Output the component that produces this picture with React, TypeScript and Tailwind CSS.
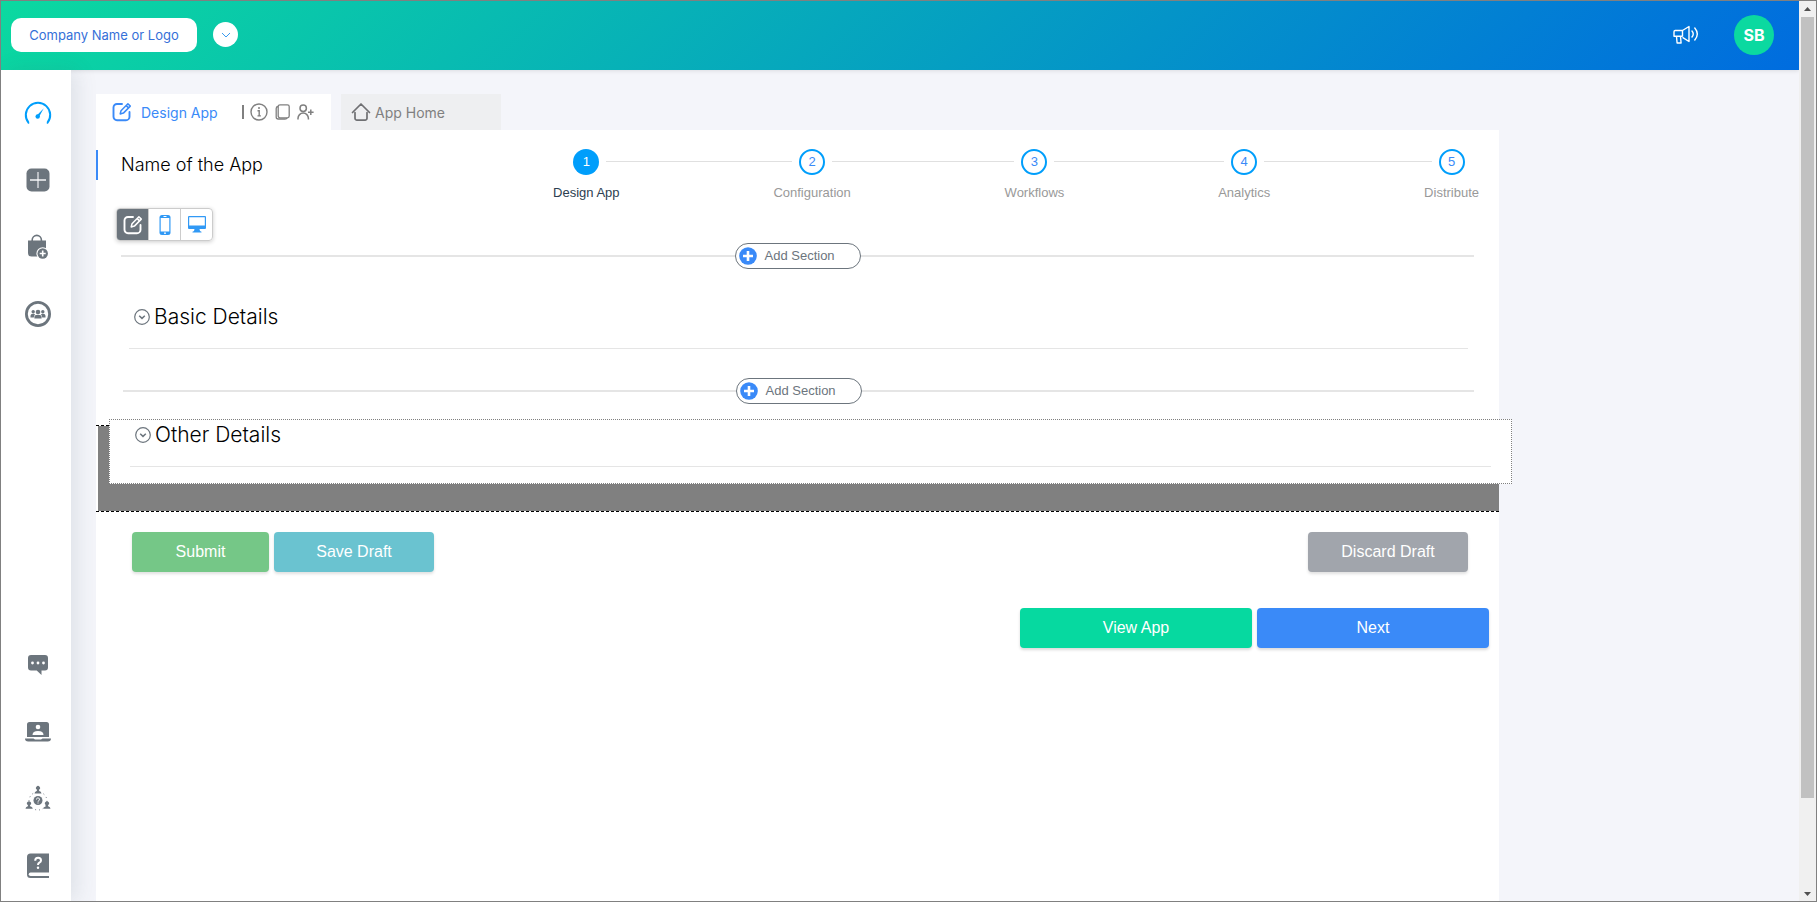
import type { ReactNode } from "react";

const steps = ["Design App", "Configuration", "Workflows", "Analytics", "Distribute"];

function EditIcon() {
  return (
    <svg className="size-[20px]" viewBox="0 0 20 20" fill="none" stroke="currentColor" strokeWidth="1.9" strokeLinecap="round" strokeLinejoin="round">
      <path d="M10 2H5a3.500 3.500 0 0 0-3.500 3.500v9A3.500 3.500 0 0 0 5 18.200h9a3.500 3.500 0 0 0 3.500-3.500V10" />
      <path strokeWidth="1.5" d="m8.200 11.900.8-3.200 6.900-6.900 2.400 2.300-6.900 7zM14.200 3.600l2.300 2.300" />
    </svg>
  );
}

function GaugeIcon() {
  return (
    <svg className="size-[28px] text-[#009efb]" viewBox="0 0 28 28" fill="none" stroke="currentColor">
      <path strokeWidth="2" d="M5.200 23.800h-.6a12.200 12.200 0 1 1 18.800 0h-.6" />
      <circle cx="13.700" cy="17.500" r="2.200" fill="currentColor" stroke="none" />
      <path d="m12.800 16.500 7-7.300-5 9z" fill="currentColor" stroke="none" />
    </svg>
  );
}

function PlusSquareIcon() {
  return (
    <svg className="size-[28px]" viewBox="0 0 28 28">
      <rect x="2.500" y="2.500" width="23" height="23" rx="5" fill="currentColor" />
      <path d="M14 6v16" stroke="#b9bdc2" strokeWidth="2" />
      <path d="M6 14h16" stroke="#fff" strokeWidth="1.400" />
    </svg>
  );
}

function BagIcon() {
  return (
    <svg className="size-[28px]" viewBox="0 0 28 28">
      <path d="M4 7.500h18v16H7.500A3.500 3.500 0 0 1 4 20z" fill="currentColor" />
      <path d="M8.200 9V7a4.600 4.600 0 0 1 9.200 0V9" fill="none" stroke="currentColor" strokeWidth="1.600" />
      <circle cx="18.700" cy="20.500" r="6.300" fill="#fff" />
      <circle cx="18.700" cy="20.500" r="5.200" fill="currentColor" />
      <path d="M18.700 17.500v6M15.700 20.500h6" stroke="#fff" strokeWidth="1.600" />
    </svg>
  );
}

function GroupIcon() {
  return (
    <svg className="size-[28px]" viewBox="0 0 28 28" fill="currentColor">
      <circle cx="14" cy="14" r="11.600" fill="none" stroke="currentColor" strokeWidth="2.800" />
      <circle cx="9.200" cy="11.700" r="1.700" />
      <circle cx="18.800" cy="11.700" r="1.700" />
      <circle cx="14" cy="12" r="2.300" />
      <path d="M6.500 17.600v-1.800q0-2 2.600-2 1.400 0 2 .6-1.300 1-1.300 3.200zM21.500 17.600v-1.800q0-2-2.600-2-1.400 0-2 .6 1.300 1 1.300 3.200zM10.400 18.600v-1.900q0-2 3.600-2t3.600 2v1.900z" />
    </svg>
  );
}

function ChatIcon() {
  return (
    <svg className="size-[28px]" viewBox="0 0 28 28">
      <path d="M7 4h14a3 3 0 0 1 3 3v9.500a3 3 0 0 1-3 3h-3.500V24l-4.800-4.500H7a3 3 0 0 1-3-3V7a3 3 0 0 1 3-3z" fill="currentColor" />
      <circle cx="8.500" cy="12" r="1.400" fill="#fff" />
      <circle cx="14" cy="12" r="1.400" fill="#fff" />
      <circle cx="19.500" cy="12" r="1.400" fill="#fff" />
    </svg>
  );
}

function LaptopUserIcon() {
  return (
    <svg className="size-[28px]" viewBox="0 0 28 28">
      <path d="M5.500 4h17A2.500 2.500 0 0 1 25 6.500V19H3V6.500A2.500 2.500 0 0 1 5.500 4zM1 20.500h8.500l1.500 1h6l1.500-1H27q0 3-3.200 3H4.200q-3.200 0-3.200-3z" fill="currentColor" />
      <circle cx="14" cy="9" r="2.300" fill="#fff" />
      <path d="M8.500 17q0-4 5.500-4t5.500 4z" fill="#fff" />
    </svg>
  );
}

function NetworkIcon() {
  return (
    <svg className="size-[28px]" viewBox="0 0 28 28" fill="currentColor">
      <circle cx="14" cy="16" r="9" fill="none" stroke="currentColor" strokeWidth="1" strokeDasharray="1 3" />
      <path d="M10.500 8.500q0-2 2.300-2.500l.2-1.200a2 2 0 1 1 2 0l.2 1.200q2.300.5 2.300 2.500z" />
      <path d="M1.500 23.800q0-2 2.300-2.500l.2-1.200a2 2 0 1 1 2 0l.2 1.200q2.300.5 2.300 2.500z" />
      <path d="M19.500 23.800q0-2 2.300-2.500l.2-1.200a2 2 0 1 1 2 0l.2 1.200q2.300.5 2.300 2.500z" />
      <circle cx="14" cy="15.500" r="4.500" />
      <path d="M12.500 14.500a1.500 1.500 0 1 1 2.300 1.200q-.8.400-.8 1M14 17.500v1" fill="none" stroke="#fff" strokeWidth="1" />
    </svg>
  );
}

function HelpBookIcon() {
  return (
    <svg className="size-[28px]" viewBox="0 0 28 28">
      <path d="M6.500 1.500H25v24.500H6.500A3.500 3.500 0 0 1 3 22.500V5a3.500 3.500 0 0 1 3.500-3.500z" fill="currentColor" />
      <path d="M6.500 20.500H25V24H6.500a1.700 1.700 0 0 1 0-3.500z" fill="#fff" />
      <path d="M11.200 8.700q0-2.900 2.900-2.900t2.900 2.600q0 1.500-1.600 2.300-1.400.8-1.400 2.300" fill="none" stroke="#fff" strokeWidth="2" />
      <circle cx="14" cy="15.800" r="1.200" fill="#fff" />
    </svg>
  );
}

function InfoIcon() {
  return (
    <svg className="size-[18px]" viewBox="0 0 18 18" fill="none" stroke="currentColor" strokeWidth="1.400">
      <circle cx="9" cy="9" r="8" />
      <path d="M7.500 7.700h1.700v5M7.500 12.900h3.400" />
      <circle cx="9" cy="5" r="1" fill="currentColor" stroke="none" />
    </svg>
  );
}

function CopyIcon() {
  return (
    <svg className="h-[16px] w-[15px]" viewBox="0 0 15 16" fill="none" stroke="currentColor" strokeWidth="1.300">
      <rect x="3.200" y=".8" width="11" height="13" rx="1.800" />
      <path d="M3 2.500q-1.800.3-1.800 2V13a2 2 0 0 0 2 2H10q1.800 0 2-1.200" />
    </svg>
  );
}

function AddUserIcon() {
  return (
    <svg className="h-[16px] w-[17px]" viewBox="0 0 17 16" fill="none" stroke="currentColor" strokeWidth="1.500">
      <circle cx="6.200" cy="4.300" r="3.200" />
      <path d="M1 15.500v-1.200a5.200 5.200 0 0 1 10.400 0v1.200M13.800 5.500v5.600M11 8.300h5.600" />
    </svg>
  );
}

function HomeIcon() {
  return (
    <svg className="size-[20px] text-[#6f7073]" viewBox="0 0 20 20" fill="none" stroke="currentColor" strokeWidth="1.700" strokeLinecap="round" strokeLinejoin="round">
      <path d="M1.500 10.500 10 2l8.500 8.500M4 10.500V16a2 2 0 0 0 2 2.200h8a2 2 0 0 0 2-2.200v-5.500" />
    </svg>
  );
}

function PhoneIcon() {
  return (
    <svg className="h-[20px] w-[12px]" viewBox="0 0 12 20">
      <rect x=".5" y="0" width="11" height="20" rx="2.500" fill="#3199f5" />
      <rect x="1.700" y="3" width="8.600" height="13.500" fill="#fff" />
      <path d="M4.500 1.500h3" stroke="#fff" />
      <circle cx="6" cy="18.200" r=".9" fill="#fff" />
    </svg>
  );
}

function MonitorIcon() {
  return (
    <svg className="h-[17px] w-[18px]" viewBox="0 0 18 17" fill="#3199f5">
      <path d="M1 0h16a1 1 0 0 1 1 1v11a1 1 0 0 1-1 1h-5.500l.5 2 1.500.8v.7h-9v-.7l1.500-.8.5-2H1a1 1 0 0 1-1-1V1a1 1 0 0 1 1-1z" />
      <path d="M1.200 1.200h15.600v8.300H1.200z" fill="#fff" />
    </svg>
  );
}

function MegaphoneIcon() {
  return (
    <svg className="h-[20px] w-[26px]" viewBox="0 0 26 20" fill="none" stroke="#fff" strokeWidth="1.400" strokeLinejoin="round">
      <path d="M9.500 5.500H2.200a1.200 1.200 0 0 0-1.200 1.200v4.600h8.500M9.500 5.500v6M9.500 5.500l6.500-4v15l-6.500-4.200M3.500 11.500l.6 6.500h4l-.6-6.500" />
      <path d="M19 6q2.500 3 0 6M21.800 3q5 6 0 12" strokeLinecap="round" />
    </svg>
  );
}

function ChevronCircle() {
  return (
    <svg className="size-[16px] text-[#6c757d]" viewBox="0 0 16 16" fill="none" stroke="currentColor">
      <circle cx="8" cy="8" r="7.300" strokeWidth="1.200" />
      <path d="m5.200 6.800 2.800 2.600 2.800-2.600" strokeWidth="1.500" />
    </svg>
  );
}

function NavLink({ label, children }: { label: string; children: ReactNode }) {
  return (
    <a href="#" aria-label={label} className="flex h-[67px] items-center justify-center pl-1">
      {children}
    </a>
  );
}

function AddSection() {
  return (
    <div className="flex items-center">
      <div className="h-[2px] flex-1 bg-[#e5e5e5]" />
      <button className="flex h-[26px] w-[126px] items-center rounded-full border border-[#6c757d] bg-white pl-[3px] text-[13px] text-[#6c757d]">
        <svg className="size-[18px]" viewBox="0 0 18 18">
          <circle cx="9" cy="9" r="8.800" fill="#3a8af8" />
          <path d="M9 4v10M4 9h10" stroke="#fff" strokeWidth="2.600" />
        </svg>
        <span className="ml-2">Add Section</span>
      </button>
      <div className="h-[2px] flex-1 bg-[#e5e5e5]" />
    </div>
  );
}

function SectionTitle({ title }: { title: string }) {
  return (
    <div className="flex h-[30px] items-center gap-1">
      <button aria-label={`Toggle ${title}`}>
        <ChevronCircle />
      </button>
      <h2 className="font-['Inter',sans-serif] text-[21px] leading-[28px] font-light text-black">{title}</h2>
    </div>
  );
}

function Stepper() {
  return (
    <ol className="mt-[19px] mr-5 flex w-[66%] text-[13px]">
      {steps.map((step, i) => (
        <li key={step} className={i > 0 ? "flex flex-auto" : "flex"}>
          {i > 0 && <div className="mt-3 h-px flex-1 bg-[#e0e0e0]" />}
          <div className="flex flex-col">
            <div className="flex">
              <div className={i > 0 ? "mt-3 h-px flex-1 bg-[#e0e0e0]" : "flex-1"} />
              <div
                className={
                  i === 0
                    ? "mx-[7px] flex size-[26px] items-center justify-center rounded-full bg-[#009efb] text-white"
                    : "mx-[7px] flex size-[26px] items-center justify-center rounded-full border-2 border-[#009efb] text-[#3a8af8]"
                }
              >
                {i + 1}
              </div>
              <div className={i < steps.length - 1 ? "mt-3 h-px flex-1 bg-[#e0e0e0]" : "flex-1"} />
            </div>
            <span className={i === 0 ? "mt-2 leading-5 text-[#2c3e50]" : "mt-2 leading-5 text-[#999]"}>
              {step}
            </span>
          </div>
        </li>
      ))}
    </ol>
  );
}

export default function App() {
  return (
    <div className="flex h-screen overflow-hidden border border-[#808080] bg-[#f4f5fa] font-['Liberation_Sans',Arial,sans-serif]">
      <div className="flex min-w-0 flex-1 flex-col">
        <header className="flex h-[69px] shrink-0 items-center bg-linear-[135deg,#0bd9a0,#006cdf] pr-[25px] pb-[2px] pl-[10px] font-['Inter',sans-serif] shadow-[0_1px_4px_rgba(0,0,0,0.1)]">
          <button className="h-[34px] w-[186px] rounded-[10px] bg-white pt-[2px] text-[13px] text-[#3570d8]">
            Company Name or Logo
          </button>
          <button aria-label="Switch company" className="ml-4 flex size-[25px] items-center justify-center rounded-full bg-white">
            <svg className="size-[10px]" viewBox="0 0 10 10" fill="none" stroke="#3a9bf0">
              <path d="m1 3 4 4 4-4" />
            </svg>
          </button>
          <button aria-label="Announcements" className="ml-auto">
            <MegaphoneIcon />
          </button>
          <button className="ml-[35px] size-[40px] rounded-full bg-[#0bd9a0] text-[16px] font-bold text-white">SB</button>
        </header>

        <div className="flex min-h-0 flex-1">
          <nav className="flex w-[70px] shrink-0 flex-col justify-between bg-white pt-[9px] pb-[2px] text-[#6c757d] shadow-[6px_0_20px_rgba(69,90,100,0.12)]">
            <div>
              <NavLink label="Dashboard"><GaugeIcon /></NavLink>
              <NavLink label="Create"><PlusSquareIcon /></NavLink>
              <NavLink label="Store"><BagIcon /></NavLink>
              <NavLink label="Teams"><GroupIcon /></NavLink>
            </div>
            <div>
              <NavLink label="Chat"><ChatIcon /></NavLink>
              <NavLink label="Training"><LaptopUserIcon /></NavLink>
              <NavLink label="Community"><NetworkIcon /></NavLink>
              <NavLink label="Help"><HelpBookIcon /></NavLink>
            </div>
          </nav>

          <main className="flex min-w-0 flex-1 flex-col pt-6 pr-[300px] pl-[25px]">
            <div className="flex h-9 shrink-0 gap-[10px] font-['Inter',sans-serif] text-[14px] text-[#808080]">
              <div className="flex w-[235px] items-center bg-white pl-4">
                <a href="#" className="flex items-center gap-[9px] text-[#3a8af8]">
                  <EditIcon />
                  Design App
                </a>
                <div className="mr-[6px] ml-auto h-[14px] w-[2px] bg-[#808080]" />
                <div className="mr-[17px] flex items-center gap-[7px]">
                  <button aria-label="Info"><InfoIcon /></button>
                  <button aria-label="Duplicate"><CopyIcon /></button>
                  <button aria-label="Add user"><AddUserIcon /></button>
                </div>
              </div>
              <a href="#" className="flex w-[160px] items-center gap-1 bg-[#eeeff1] pl-[10px]">
                <HomeIcon />
                App Home
              </a>
            </div>

            <div className="min-h-0 flex-1 bg-white">
              <div className="flex items-start justify-between">
                <h1 className="mt-5 border-l-2 border-[#3a8af8] pl-[23px] font-['Inter',sans-serif] text-[18px] leading-[30px] font-light text-black">
                  Name of the App
                </h1>
                <Stepper />
              </div>

              <div className="mt-[5px] ml-5 flex h-[33px] w-[97px] overflow-hidden rounded-[4px] border border-[#ccc] shadow-[0_1px_4px_rgba(0,0,0,0.2)]">
                <button aria-label="Edit" className="flex flex-1 items-center justify-center bg-[#6c757d] text-white">
                  <EditIcon />
                </button>
                <button aria-label="Mobile preview" className="flex flex-1 items-center justify-center border-x border-[#ccc]">
                  <PhoneIcon />
                </button>
                <button aria-label="Desktop preview" className="flex flex-1 items-center justify-center">
                  <MonitorIcon />
                </button>
              </div>

              <div className="mt-[2px] px-[25px]">
                <AddSection />
              </div>

              <section className="mt-[33px] mr-[31px] ml-[33px] border-b border-[#e5e5e5] pb-4 pl-[5px]">
                <SectionTitle title="Basic Details" />
              </section>

              <div className="mt-[29px] pr-[25px] pl-[27px]">
                <AddSection />
              </div>

              {/* drop zone with the section being dragged over it */}
              <div className="relative mt-[21px] border-y border-dashed border-black">
                <div className="ml-[2px] h-[85px] bg-[#808080]" />
                <section className="absolute -top-[7px] left-[13px] h-[65px] w-full border border-dotted border-[#808080] bg-white pr-5 pl-5">
                  <div className="border-b border-[#e5e5e5] pb-4 pl-[5px]">
                    <SectionTitle title="Other Details" />
                  </div>
                </section>
              </div>

              <div className="mt-5 mr-[31px] ml-9 flex gap-[5px] text-[16px] text-white">
                <button className="h-10 w-[137px] rounded-[4px] bg-[#75c787] shadow-[0_2px_3px_rgba(0,0,0,0.12)]">Submit</button>
                <button className="h-10 w-[160px] rounded-[4px] bg-[#6ac3d0] shadow-[0_2px_3px_rgba(0,0,0,0.12)]">Save Draft</button>
                <button className="ml-auto h-10 w-[160px] rounded-[4px] bg-[#a1a5ac] shadow-[0_2px_3px_rgba(0,0,0,0.12)]">Discard Draft</button>
              </div>

              <div className="mt-9 mr-[10px] flex justify-end gap-[5px] text-[16px] text-white">
                <button className="h-10 w-[232px] rounded-[4px] bg-[#06d9a0] shadow-[0_2px_3px_rgba(0,0,0,0.15)]">View App</button>
                <button className="h-10 w-[232px] rounded-[4px] bg-[#3a8af8] shadow-[0_2px_3px_rgba(0,0,0,0.15)]">Next</button>
              </div>
            </div>
          </main>
        </div>
      </div>

      <div className="flex w-[17px] shrink-0 flex-col bg-[#f0f0f0] px-[2px]">
        <svg className="h-4 w-full shrink-0" viewBox="0 0 12 16" fill="#505050">
          <path d="M6 6l3.500 4h-7z" />
        </svg>
        <div className="flex-9 bg-[#c1c1c1]" />
        <div className="flex-1" />
        <svg className="h-4 w-full shrink-0" viewBox="0 0 12 16" fill="#505050">
          <path d="M6 11l3.500-4h-7z" />
        </svg>
      </div>
    </div>
  );
}
